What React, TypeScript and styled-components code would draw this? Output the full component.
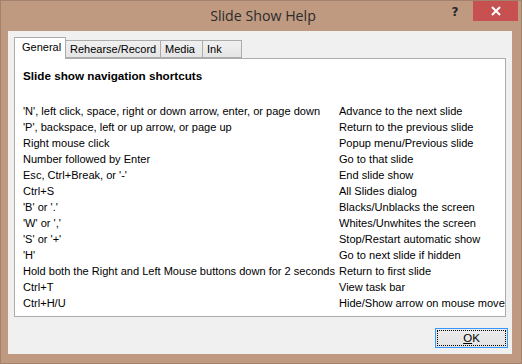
import React from "react";
import styled, { createGlobalStyle } from "styled-components";

const GlobalStyle = createGlobalStyle`
  html, body { margin: 0; padding: 0; background: #ffffff; }
  * { box-sizing: border-box; }
`;

const Window = styled.div`
  width: 522px;
  height: 364px;
  background: #bf9a81;
  border: 1px solid #a2826d;
  display: flex;
  flex-direction: column;
  padding: 0 9px 9px 7px;
  font-family: "Liberation Sans", Arial, sans-serif;
`;

const TitleBar = styled.div`
  height: 30px;
  position: relative;
  display: flex;
  align-items: center;
  justify-content: center;
`;

const Title = styled.div`
  font-family: "Open Sans", "Noto Sans", sans-serif;
  font-size: 14.2px;
  color: #2b2b2b;
  margin-top: -1px;
  margin-left: 6px;
`;

const Controls = styled.div`
  position: absolute;
  right: -6px;
  top: 0;
  display: flex;
  align-items: flex-start;
`;

const HelpButton = styled.div`
  width: 28px;
  height: 20px;
  display: flex;
  align-items: center;
  justify-content: center;
  font-family: "DejaVu Sans", sans-serif;
  font-weight: bold;
  font-size: 12px;
  color: #262626;
  margin-right: 4px;
  margin-top: 1px;
`;

const CloseButton = styled.div`
  width: 45px;
  height: 20px;
  background: #c75050;
  display: flex;
  align-items: center;
  justify-content: center;
`;

const Client = styled.div`
  flex: 1;
  background: #f0f0f0;
  padding: 6px 5px 0 6px;
  display: flex;
  flex-direction: column;
`;

const TabStrip = styled.div`
  display: flex;
  align-items: flex-end;
  height: 21px;
  position: relative;
  z-index: 1;
`;

const Tab = styled.div<{ $active?: boolean; $width: number }>`
  width: ${(p) => p.$width}px;
  height: ${(p) => (p.$active ? "22px" : "18px")};
  margin-bottom: ${(p) => (p.$active ? "-1px" : "0")};
  padding: ${(p) => (p.$active ? "3px 0 0 7px" : "2px 0 0 4px")};
  border: 1px solid #acacac;
  border-bottom: ${(p) => (p.$active ? "none" : "1px solid #acacac")};
  border-left: ${(p) => (p.$active ? "1px solid #acacac" : "none")};
  background: ${(p) => (p.$active ? "#ffffff" : "linear-gradient(#f0f0f0, #e5e5e5)")};
  font-size: 11px;
  color: #000;
  display: flex;
  align-items: flex-start;
  white-space: nowrap;
  overflow: hidden;
`;

const Panel = styled.div`
  width: 492px;
  height: 259px;
  background: #ffffff;
  border: 1px solid #acacac;
  padding: 10px 0 0 8px;
`;

const Heading = styled.div`
  font-weight: bold;
  font-size: 11.7px;
  color: #000;
  height: 34px;
`;

const Shortcuts = styled.div`
  display: grid;
  grid-template-columns: 316px 1fr;
  font-size: 11.05px;
  line-height: 16px;
  color: #000;
`;

const Cell = styled.div`
  white-space: nowrap;
`;

const Footer = styled.div`
  display: flex;
  justify-content: flex-end;
  padding-top: 11px;
`;

const OkButton = styled.div`
  width: 73px;
  height: 20px;
  border: 1px solid #3399ff;
  background: linear-gradient(#ececec, #e3e3e3);
  padding: 1px;
  margin-right: -1px;
`;

const Focus = styled.div`
  width: 100%;
  height: 100%;
  border: 1px dotted #000;
  display: flex;
  align-items: center;
  justify-content: center;
  font-size: 11.5px;
  color: #000;
  u { text-decoration: underline; }
`;

const rows: [string, string][] = [
  ["'N', left click, space, right or down arrow, enter, or page down", "Advance to the next slide"],
  ["'P', backspace, left or up arrow, or page up", "Return to the previous slide"],
  ["Right mouse click", "Popup menu/Previous slide"],
  ["Number followed by Enter", "Go to that slide"],
  ["Esc, Ctrl+Break, or '-'", "End slide show"],
  ["Ctrl+S", "All Slides dialog"],
  ["'B' or '.'", "Blacks/Unblacks the screen"],
  ["'W' or ','", "Whites/Unwhites the screen"],
  ["'S' or '+'", "Stop/Restart automatic show"],
  ["'H'", "Go to next slide if hidden"],
  ["Hold both the Right and Left Mouse buttons down for 2 seconds", "Return to first slide"],
  ["Ctrl+T", "View task bar"],
  ["Ctrl+H/U", "Hide/Show arrow on mouse move"],
];

const tabs: [string, number][] = [
  ["General", 52],
  ["Rehearse/Record", 95],
  ["Media", 42],
  ["Ink", 39],
];

export default function App() {
  return (
    <>
      <GlobalStyle />
      <Window>
        <TitleBar>
          <Title>Slide Show Help</Title>
          <Controls>
            <HelpButton>?</HelpButton>
            <CloseButton>
              <svg width="10" height="10" viewBox="0 0 10 10">
                <path d="M1 1 L9 9 M9 1 L1 9" stroke="#ffffff" strokeWidth="2" />
              </svg>
            </CloseButton>
          </Controls>
        </TitleBar>
        <Client>
          <TabStrip>
            {tabs.map(([label, w], i) => (
              <Tab key={label} $active={i === 0} $width={w}>
                {label}
              </Tab>
            ))}
          </TabStrip>
          <Panel>
            <Heading>Slide show navigation shortcuts</Heading>
            <Shortcuts>
              {rows.map(([k, v]) => (
                <React.Fragment key={k}>
                  <Cell>{k}</Cell>
                  <Cell>{v}</Cell>
                </React.Fragment>
              ))}
            </Shortcuts>
          </Panel>
          <Footer>
            <OkButton>
              <Focus>
                <span><u>O</u>K</span>
              </Focus>
            </OkButton>
          </Footer>
        </Client>
      </Window>
    </>
  );
}
